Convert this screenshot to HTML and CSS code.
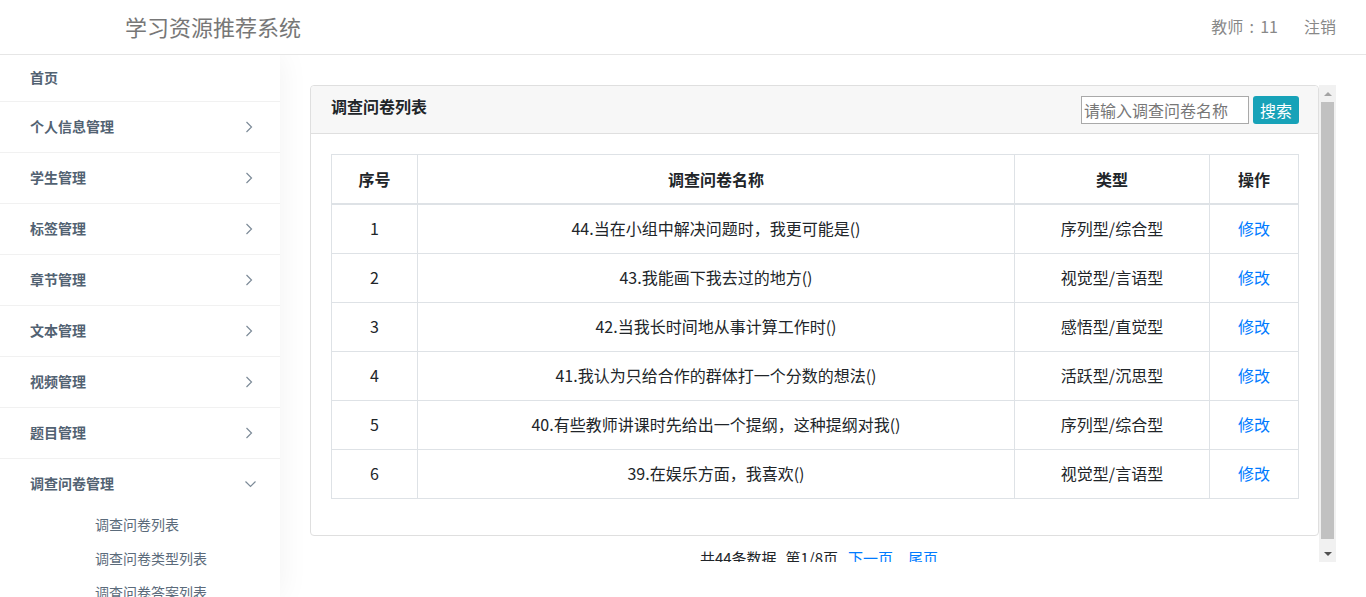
FILE: index.html
```html
<!DOCTYPE html>
<html lang="zh-CN">
<head>
<meta charset="utf-8">
<title>学习资源推荐系统</title>
<link rel="stylesheet" href="styles.css">
</head>
<body>
<header class="topbar">
  <div class="brand">学习资源推荐系统</div>
  <div class="user">
    <span class="user-name">教师<span class="colon">:</span>11</span>
    <span class="logout">注销</span>
  </div>
</header>
<div class="layout">
  <aside class="sidebar">
    <ul class="menu">
      <li class="menu-item first"><span>首页</span></li>
      <li class="menu-item"><span>个人信息管理</span><svg class="chev" viewBox="0 0 12 12" width="12" height="12"><path d="M1.5 1 L6.5 6 L1.5 11" /></svg></li>
      <li class="menu-item"><span>学生管理</span><svg class="chev" viewBox="0 0 12 12" width="12" height="12"><path d="M1.5 1 L6.5 6 L1.5 11" /></svg></li>
      <li class="menu-item"><span>标签管理</span><svg class="chev" viewBox="0 0 12 12" width="12" height="12"><path d="M1.5 1 L6.5 6 L1.5 11" /></svg></li>
      <li class="menu-item"><span>章节管理</span><svg class="chev" viewBox="0 0 12 12" width="12" height="12"><path d="M1.5 1 L6.5 6 L1.5 11" /></svg></li>
      <li class="menu-item"><span>文本管理</span><svg class="chev" viewBox="0 0 12 12" width="12" height="12"><path d="M1.5 1 L6.5 6 L1.5 11" /></svg></li>
      <li class="menu-item"><span>视频管理</span><svg class="chev" viewBox="0 0 12 12" width="12" height="12"><path d="M1.5 1 L6.5 6 L1.5 11" /></svg></li>
      <li class="menu-item"><span>题目管理</span><svg class="chev" viewBox="0 0 12 12" width="12" height="12"><path d="M1.5 1 L6.5 6 L1.5 11" /></svg></li>
      <li class="menu-item open"><span>调查问卷管理</span><svg class="chev" viewBox="0 0 12 12" width="12" height="12"><path d="M0.5 3.5 L5.5 8.5 L10.5 3.5" /></svg></li>
      <li class="sub-item">调查问卷列表</li>
      <li class="sub-item">调查问卷类型列表</li>
      <li class="sub-item">调查问卷答案列表</li>
    </ul>
  </aside>
  <main class="main">
    <div class="frame">
      <div class="frame-view">
        <section class="panel">
          <div class="panel-head">
            <h2 class="panel-title">调查问卷列表</h2>
            <div class="search">
              <input class="search-input" type="text" placeholder="请输入调查问卷名称">
              <button class="search-btn" type="button">搜索</button>
            </div>
          </div>
          <div class="panel-body">
            <table class="grid">
              <colgroup>
                <col class="c-no"><col class="c-name"><col class="c-type"><col class="c-op">
              </colgroup>
              <thead>
                <tr><th>序号</th><th>调查问卷名称</th><th>类型</th><th>操作</th></tr>
              </thead>
              <tbody>
                <tr><td>1</td><td>44.当在小组中解决问题时，我更可能是()</td><td>序列型/综合型</td><td><a class="link">修改</a></td></tr>
                <tr><td>2</td><td>43.我能画下我去过的地方()</td><td>视觉型/言语型</td><td><a class="link">修改</a></td></tr>
                <tr><td>3</td><td>42.当我长时间地从事计算工作时()</td><td>感悟型/直觉型</td><td><a class="link">修改</a></td></tr>
                <tr><td>4</td><td>41.我认为只给合作的群体打一个分数的想法()</td><td>活跃型/沉思型</td><td><a class="link">修改</a></td></tr>
                <tr><td>5</td><td>40.有些教师讲课时先给出一个提纲，这种提纲对我()</td><td>序列型/综合型</td><td><a class="link">修改</a></td></tr>
                <tr><td>6</td><td>39.在娱乐方面，我喜欢()</td><td>视觉型/言语型</td><td><a class="link">修改</a></td></tr>
              </tbody>
            </table>
          </div>
        </section>
        <div class="pager">
          <span class="pg-total">共44条数据</span>
          <span class="pg-page">第1/8页</span>
          <a class="link pg-next">下一页</a>
          <a class="link pg-last">尾页</a>
        </div>
      </div>
      <div class="scrollbar">
        <div class="sb-btn"><span class="tri-up"></span></div>
        <div class="sb-track"><div class="sb-thumb"></div></div>
        <div class="sb-btn"><span class="tri-down"></span></div>
      </div>
    </div>
  </main>
</div>
</body>
</html>
```
FILE: styles.css
```css
* { box-sizing: border-box; }
html, body { margin: 0; padding: 0; }
body {
  width: 1366px;
  height: 597px;
  overflow: hidden;
  background: #fff;
  font-family: "Noto Sans CJK SC", "Open Sans", sans-serif;
  color: #212529;
}

.topbar {
  position: relative;
  z-index: 2;
  height: 55px;
  border-bottom: 1px solid #e6e6e6;
  background: #fff;
  display: flex;
  align-items: center;
  justify-content: space-between;
  padding: 0 30px 0 125px;
}
.brand {
  font-size: 22px;
  line-height: 30px;
  color: #777;
  margin-top: -2px;
}
.user {
  display: flex;
  gap: 26px;
  font-size: 16px;
  color: #888;
  line-height: 24px;
  margin-top: -2px;
}
.colon {
  display: inline-block;
  width: 17px;
  text-align: center;
}

.layout {
  display: flex;
  height: 542px;
}

.sidebar {
  position: relative;
  z-index: 1;
  width: 280px;
  flex: none;
  background: #fff;
  box-shadow: 0 0 30px rgba(0, 0, 0, 0.06);
}
.menu {
  list-style: none;
  margin: 0;
  padding: 0;
}
.menu-item {
  height: 51px;
  border-bottom: 1px solid #f1f1f1;
  display: flex;
  align-items: center;
  justify-content: space-between;
  padding: 0 23px 0 30px;
  font-size: 14px;
  font-weight: bold;
  color: #526272;
}
.menu-item > span { margin-top: -2px; }
.menu-item.first { height: 47px; }
.menu-item.open { border-bottom: none; height: 50px; }
.chev {
  fill: none;
  stroke: #7d8b98;
  stroke-width: 1.2;
}
.sub-item {
  height: 34px;
  line-height: 30px;
  padding-left: 95px;
  font-size: 14px;
  color: #5b6b7b;
}

.main {
  flex: 1;
  padding: 30px 30px 0 30px;
}
.frame {
  height: 477px;
  display: flex;
}
.frame-view {
  flex: 1;
  overflow: hidden;
}

.panel {
  border: 1px solid #dfdfdf;
  border-radius: 4px;
  background: #fff;
}
.panel-head {
  height: 48px;
  background: #f7f7f7;
  border-bottom: 1px solid #dfdfdf;
  border-radius: 4px 4px 0 0;
  display: flex;
  justify-content: space-between;
  align-items: center;
  padding: 0 19px 0 20px;
}
.panel-title {
  margin: -8px 0 0 0;
  font-size: 16px;
  line-height: 24px;
  font-weight: bold;
  color: #212529;
}
.search {
  display: flex;
  gap: 4px;
  align-items: center;
}
.search-input {
  width: 168px;
  height: 28px;
  border: 1px solid #a9a9a9;
  padding: 0 2px;
  font-family: inherit;
  font-size: 16px;
  color: #333;
  background: #fff;
  outline: none;
}
.search-input::placeholder { color: #777; }
.search-btn {
  width: 46px;
  height: 28px;
  border: none;
  border-radius: 3px;
  background: #17a2b8;
  color: #fff;
  font-family: inherit;
  font-size: 16px;
  padding: 0;
}

.panel-body {
  padding: 20px 19px 20px 20px;
}
.grid {
  width: 967px;
  table-layout: fixed;
  border-collapse: collapse;
  margin-bottom: 16px;
  font-size: 16px;
}
.c-no { width: 86px; }
.c-name { width: 597px; }
.c-type { width: 195px; }
.c-op { width: 89px; }
.grid th, .grid td {
  border: 1px solid #dee2e6;
  padding: 11px 4px 13px 4px;
  line-height: 24px;
  text-align: center;
  white-space: nowrap;
}
.grid th {
  font-weight: bold;
  border-bottom: 2px solid #dee2e6;
  padding-top: 12px;
  padding-bottom: 12px;
}
.link { color: #007bff; cursor: pointer; }

.pager {
  margin-top: 10px;
  display: flex;
  justify-content: center;
  font-size: 15px;
  line-height: 24px;
  color: #212529;
  padding-left: 9px;
}
.pg-page { margin-left: 9px; }
.pg-next { margin-left: 10px; }
.pg-last { margin-left: 15px; }

.scrollbar {
  width: 17px;
  flex: none;
  background: #f1f1f1;
  display: flex;
  flex-direction: column;
}
.sb-btn {
  height: 17px;
  display: flex;
  align-items: center;
  justify-content: center;
}
.tri-up {
  width: 0; height: 0;
  border-left: 4px solid transparent;
  border-right: 4px solid transparent;
  border-bottom: 4px solid #a3a3a3;
}
.tri-down {
  width: 0; height: 0;
  border-left: 4px solid transparent;
  border-right: 4px solid transparent;
  border-top: 4px solid #505050;
}
.sb-track {
  flex: 1;
  padding: 0 2px 6px 2px;
  display: flex;
}
.sb-thumb {
  flex: 1;
  background: #c1c1c1;
}
```
